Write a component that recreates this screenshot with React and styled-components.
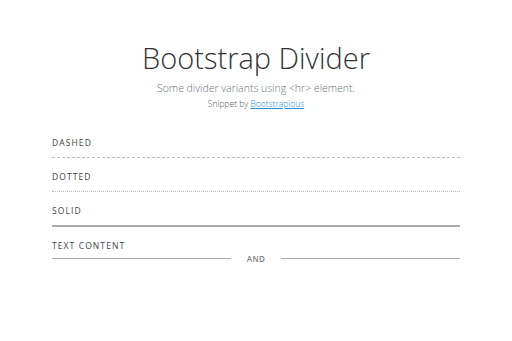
import styled, { createGlobalStyle } from "styled-components";

const GlobalStyle = createGlobalStyle`
  body {
    margin: 0;
    background: #fff;
    font-family: "Open Sans", "Noto Sans", sans-serif;
    color: #333;
  }
`;

const Page = styled.div`
  width: 408px;
  margin: 0 auto;
  padding-top: 38px;
`;

const Header = styled.header`
  text-align: center;
  margin-bottom: 25px;
`;

const Title = styled.h1`
  margin: 0;
  font-size: 29px;
  font-weight: 300;
  line-height: 40px;
  color: #333;
`;

const Lead = styled.p`
  margin: 3px 0 0;
  font-size: 10.5px;
  font-weight: 300;
  color: #6c757d;
  line-height: 15px;
`;

const Credit = styled.p`
  margin: 1px 0 0;
  font-size: 8.5px;
  font-weight: 300;
  color: #555;
  line-height: 14px;

  a {
    color: #2a8fd6;
    text-decoration: underline;
  }
`;

const Section = styled.section`
  margin-bottom: 12px;
`;

const Label = styled.h2`
  margin: 0 0 7px;
  font-size: 8.5px;
  font-weight: 500;
  letter-spacing: 1.1px;
  text-transform: uppercase;
  color: #444;
  line-height: 14px;
`;

const Rule = styled.hr`
  margin: 0;
  border: 0;
  border-top: ${({ $variant }) =>
    $variant === "solid" ? "2px solid #aaa" : `1px ${$variant} #bbb`};
`;

const TextRule = styled.div`
  display: flex;
  align-items: center;
  gap: 16px;
  height: 1px;
  margin-top: -2px;

  &::before,
  &::after {
    content: "";
    flex: 1;
    border-top: 1px solid #aaa;
  }
`;

const RuleText = styled.span`
  font-size: 8px;
  font-weight: 600;
  color: #808080;
  letter-spacing: 0.3px;
  line-height: 12px;
`;

export default function App() {
  return (
    <>
      <GlobalStyle />
      <Page>
        <Header>
          <Title>Bootstrap Divider</Title>
          <Lead>Some divider variants using &lt;hr&gt; element.</Lead>
          <Credit>
            Snippet by <a href="#">Bootstrapious</a>
          </Credit>
        </Header>
        <Section>
          <Label>Dashed</Label>
          <Rule $variant="dashed" />
        </Section>
        <Section>
          <Label>Dotted</Label>
          <Rule $variant="dotted" />
        </Section>
        <Section>
          <Label>Solid</Label>
          <Rule $variant="solid" />
        </Section>
        <Section>
          <Label>Text content</Label>
          <TextRule>
            <RuleText>AND</RuleText>
          </TextRule>
        </Section>
      </Page>
    </>
  );
}
